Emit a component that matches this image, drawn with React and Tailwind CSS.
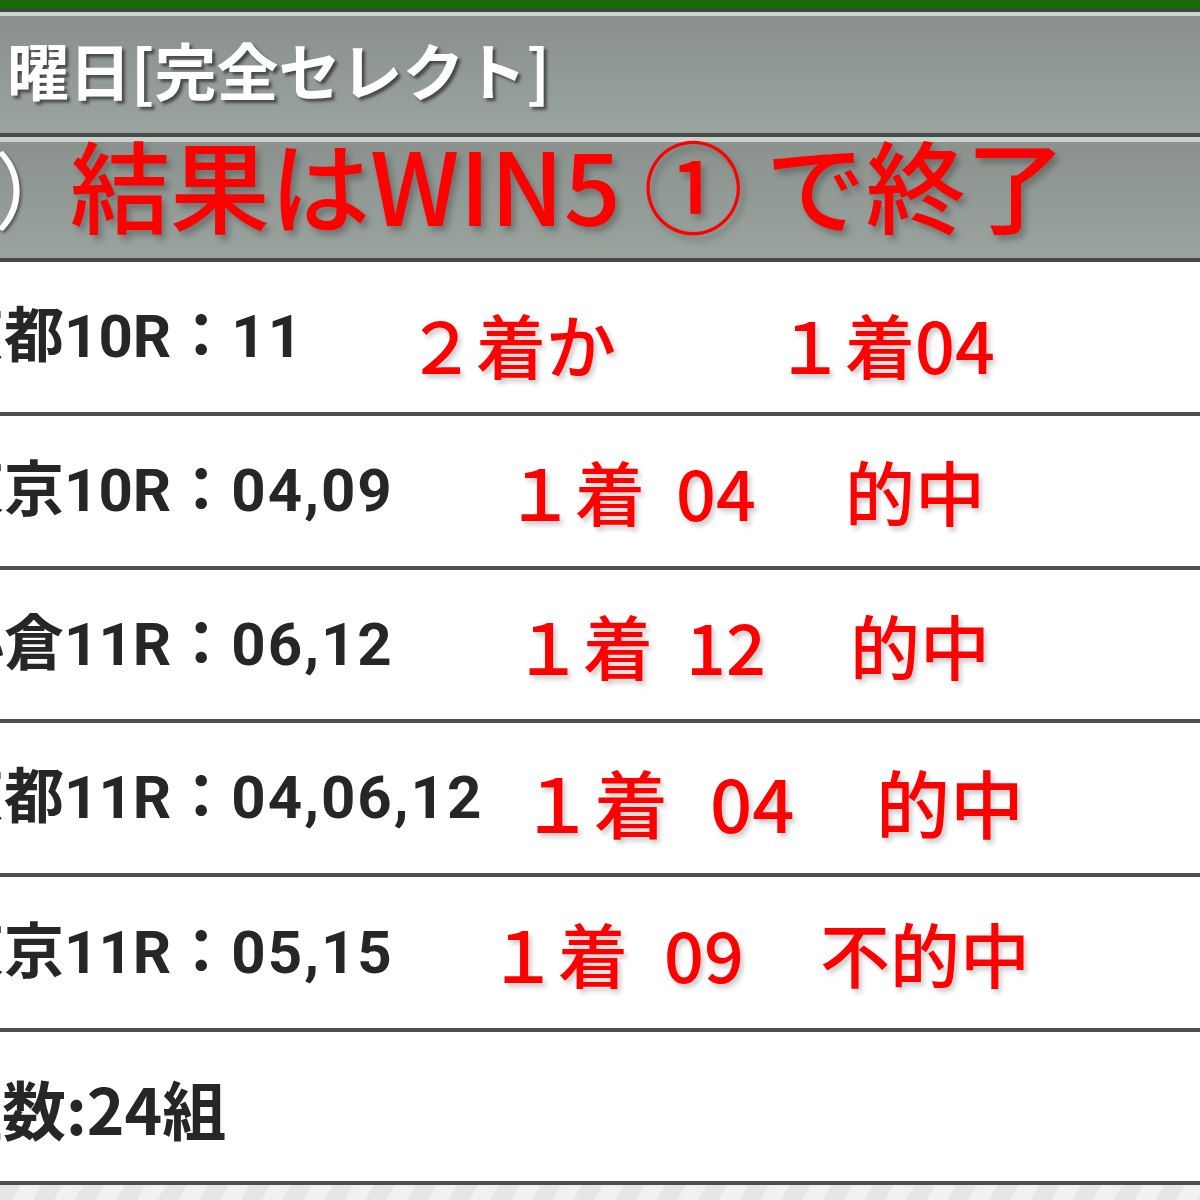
const rows = [
  {
    pre: "京都10R：",
    nums: "11",
    h: "h-[154px]",
    start: "w-[462px]",
    shift: "mt-[14px]",
    marks: [
      { text: "２着か", box: "w-[369px]" },
      { text: "１着04", box: "w-auto" },
    ],
  },
  {
    pre: "東京10R：",
    nums: "04,09",
    h: "h-[154px]",
    start: "w-[561px]",
    shift: "mt-0",
    marks: [
      { text: "１着", box: "w-[171px]" },
      { text: "04", box: "w-[169px]" },
      { text: "的中", box: "w-auto" },
    ],
  },
  {
    pre: "小倉11R：",
    nums: "06,12",
    h: "h-[153px]",
    start: "w-[569px]",
    shift: "mt-0",
    marks: [
      { text: "１着", box: "w-[173px]" },
      { text: "12", box: "w-[164px]" },
      { text: "的中", box: "w-auto" },
    ],
  },
  {
    pre: "京都11R：",
    nums: "04,06,12",
    h: "h-[154px]",
    start: "w-[576px]",
    shift: "mt-[6px]",
    big: true,
    marks: [
      { text: "１着", box: "w-[190px]" },
      { text: "04", box: "w-[166px]" },
      { text: "的中", box: "w-auto" },
    ],
  },
  {
    pre: "東京11R：",
    nums: "05,15",
    h: "h-[155px]",
    start: "w-[544px]",
    shift: "mt-0",
    marks: [
      { text: "１着", box: "w-[176px]" },
      { text: "09", box: "w-[156px]" },
      { text: "不的中", box: "w-auto" },
    ],
  },
];

function Row({ row }) {
  return (
    <div className={`flex ${row.h} shrink-0 items-center border-b-4 border-[#4f4f4f] bg-white`}>
      <div className={`-ml-[56px] ${row.start} shrink-0 whitespace-nowrap font-['Roboto','Noto_Sans_CJK_JP',sans-serif] text-[60px] font-bold leading-none text-[#262626]`}>
        {row.pre}
        <span className="tracking-[2px]">{row.nums}</span>
      </div>
      <div
        className={`flex ${row.shift} items-center whitespace-nowrap font-['Noto_Sans_CJK_JP',sans-serif] ${
          row.big ? "text-[74px]" : "text-[70px]"
        } font-medium leading-none text-[#ff0000] [text-shadow:3px_4px_5px_rgba(0,0,0,0.2)]`}
      >
        {row.marks.map((mark) => (
          <span key={mark.text} className={`${mark.box} shrink-0`}>
            {mark.text}
          </span>
        ))}
      </div>
    </div>
  );
}

export default function App() {
  return (
    <div className="flex h-[1200px] w-[1200px] flex-col overflow-hidden bg-white">
      <div className="h-[9px] shrink-0 bg-[#186c08]" />
      <div className="h-[3px] shrink-0 bg-[#3f4442]" />

      <div className="flex h-[125px] shrink-0 items-center border-t-4 border-b-4 border-t-[#cbd3cf] border-b-[#474c4a] bg-gradient-to-b from-[#8a918d] to-[#9aa39e] pl-[7px]">
        <span className="mb-[12px] whitespace-nowrap font-['Noto_Sans_CJK_JP',sans-serif] text-[62px] font-bold leading-none text-white [text-shadow:3px_3px_3px_rgba(40,40,40,0.7)]">
          曜日[完全セレクト]
        </span>
      </div>

      <div className="flex h-[125px] shrink-0 items-center border-t-[5px] border-b-4 border-t-[#c9d1cd] border-b-[#454a48] bg-gradient-to-b from-[#8b928e] to-[#9aa39e]">
        <span className="-ml-[6px] mb-[26px] w-[76px] shrink-0 font-['Noto_Sans_CJK_JP',sans-serif] text-[84px] font-normal leading-none text-white [text-shadow:2px_2px_3px_rgba(40,40,40,0.6)]">
          ）
        </span>
        <span className="mb-[34px] whitespace-nowrap font-['Noto_Sans_CJK_JP',sans-serif] text-[100px] font-medium leading-none text-[#ff0000] [text-shadow:4px_5px_6px_rgba(0,0,0,0.25)]">
          結果はWIN5 ① で終了
        </span>
      </div>

      {rows.map((row) => (
        <Row key={row.pre + row.nums} row={row} />
      ))}

      <div className="flex h-[153px] shrink-0 items-center border-b-4 border-[#4f4f4f] bg-white">
        <div className="-ml-[62px] whitespace-nowrap font-['Noto_Sans_CJK_JP',sans-serif] text-[64px] font-bold leading-none text-[#262626]">
          組数:24組
        </div>
      </div>

      <div className="flex-1 bg-[repeating-linear-gradient(120deg,#e6e6e6_0px,#e6e6e6_18px,#f1f1f1_18px,#f1f1f1_36px)]" />
    </div>
  );
}
